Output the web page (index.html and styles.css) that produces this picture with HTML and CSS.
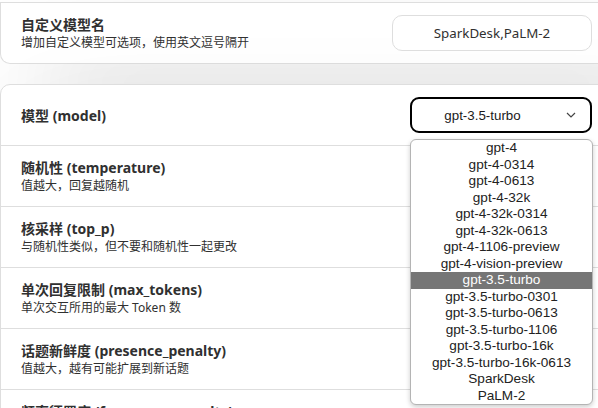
FILE: index.html
```html
<!DOCTYPE html>
<html lang="zh">
<head>
<meta charset="utf-8">
<title>设置</title>
<link rel="stylesheet" href="styles.css">
</head>
<body>
<div class="page">
  <section class="list list-first">
    <div class="item item-divider">
      <div class="item-text">
        <div class="item-title">自定义模型名</div>
        <div class="item-sub">增加自定义模型可选项，使用英文逗号隔开</div>
      </div>
      <input class="text-input" type="text" value="SparkDesk,PaLM-2">
    </div>
  </section>

  <section class="list">
    <div class="item">
      <div class="item-text">
        <div class="item-title">模型 (model)</div>
      </div>
      <div class="select-wrap">
        <div class="select-box">
          <span class="select-value">gpt-3.5-turbo</span>
          <svg class="chevron" width="10" height="6" viewBox="0 0 10 6"><polyline points="1,1 5,5 9,1" fill="none" stroke="#444" stroke-width="1.2"/></svg>
        </div>
        <ul class="dropdown">
          <li>gpt-4</li>
          <li>gpt-4-0314</li>
          <li>gpt-4-0613</li>
          <li>gpt-4-32k</li>
          <li>gpt-4-32k-0314</li>
          <li>gpt-4-32k-0613</li>
          <li>gpt-4-1106-preview</li>
          <li>gpt-4-vision-preview</li>
          <li class="selected">gpt-3.5-turbo</li>
          <li>gpt-3.5-turbo-0301</li>
          <li>gpt-3.5-turbo-0613</li>
          <li>gpt-3.5-turbo-1106</li>
          <li>gpt-3.5-turbo-16k</li>
          <li>gpt-3.5-turbo-16k-0613</li>
          <li>SparkDesk</li>
          <li>PaLM-2</li>
        </ul>
      </div>
    </div>
    <div class="item">
      <div class="item-text">
        <div class="item-title">随机性 (temperature)</div>
        <div class="item-sub">值越大，回复越随机</div>
      </div>
    </div>
    <div class="item">
      <div class="item-text">
        <div class="item-title">核采样 (top_p)</div>
        <div class="item-sub">与随机性类似，但不要和随机性一起更改</div>
      </div>
    </div>
    <div class="item">
      <div class="item-text">
        <div class="item-title">单次回复限制 (max_tokens)</div>
        <div class="item-sub">单次交互所用的最大 Token 数</div>
      </div>
    </div>
    <div class="item">
      <div class="item-text">
        <div class="item-title">话题新鲜度 (presence_penalty)</div>
        <div class="item-sub">值越大，越有可能扩展到新话题</div>
      </div>
    </div>
    <div class="item">
      <div class="item-text">
        <div class="item-title">频率惩罚度 (frequency_penalty)</div>
        <div class="item-sub">值越大，越有可能降低重复字词</div>
      </div>
    </div>
  </section>
</div>
</body>
</html>
```
FILE: styles.css
```css
html, body {
  margin: 0;
  padding: 0;
  background: #fff;
  overflow: hidden;
  height: 408px;
}
body {
  font-family: "Noto Sans", "Noto Sans CJK SC", sans-serif;
  color: rgb(48, 48, 48);
  padding-top: 2px;
}
.page {
  width: 613px;
}
.list {
  border: 1px solid rgb(222, 222, 222);
  border-radius: 10px;
  box-shadow: 50px 50px 100px 10px rgba(0, 0, 0, 0.1);
  margin-bottom: 20px;
  background: #fff;
}
.list-first {
  border-top: none;
  border-top-left-radius: 0;
  border-top-right-radius: 0;
}
.item {
  display: flex;
  justify-content: space-between;
  align-items: center;
  min-height: 40px;
  padding: 10px 20px;
  border-bottom: 1px solid rgb(222, 222, 222);
}
.list .item:last-child {
  border-bottom: none;
}
.item-divider {
  border-top: 1px solid rgb(222, 222, 222);
}
.item-text {
  display: flex;
  flex-direction: column;
}
.item-title {
  font-size: 14px;
  font-weight: 700;
  line-height: 19px;
}
.item-sub {
  font-size: 12px;
  font-weight: 400;
  line-height: 17px;
}
.text-input {
  appearance: none;
  box-sizing: border-box;
  width: 200px;
  height: 36px;
  border: 1px solid rgb(222, 222, 222);
  border-radius: 10px;
  background: #fff;
  color: rgb(48, 48, 48);
  font-family: "Noto Sans", sans-serif;
  font-size: 13.33px;
  text-align: center;
  padding: 0 10px;
  outline: none;
}
.select-wrap {
  position: relative;
}
.select-box {
  box-sizing: border-box;
  width: 182px;
  height: 36px;
  border: 2px solid #000;
  border-radius: 9px;
  background: #fff;
  display: flex;
  align-items: center;
  padding: 0 14px 0 10px;
  font-family: "Liberation Sans", Arial, sans-serif;
  font-size: 13.33px;
  color: #1a1a1a;
}
.select-value {
  flex: 1;
  text-align: center;
  padding-right: 23px;
}
.chevron {
  display: block;
}
.dropdown {
  position: absolute;
  top: 42px;
  left: 0;
  width: 183px;
  box-sizing: border-box;
  margin: 0;
  padding: 0;
  list-style: none;
  background: #fff;
  border: 1px solid #b4b4b4;
  border-radius: 6px;
  box-shadow: 0 2px 5px rgba(0, 0, 0, 0.2);
  font-family: "Liberation Sans", Arial, sans-serif;
  font-size: 13.6px;
  color: #222;
  overflow: hidden;
  z-index: 10;
}
.dropdown li {
  height: 16.5px;
  line-height: 16.5px;
  text-align: center;
  white-space: nowrap;
}
.dropdown li.selected {
  background: #767676;
  color: #fff;
}
```
